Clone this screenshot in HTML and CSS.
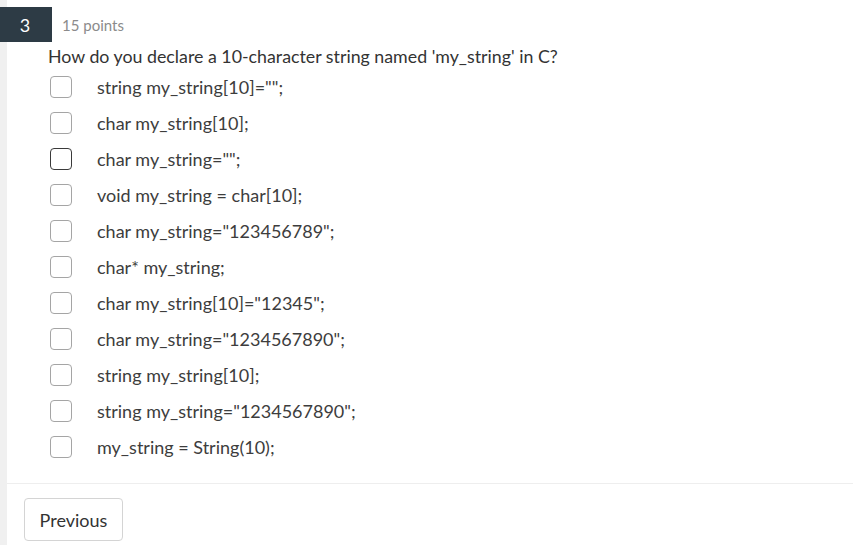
FILE: index.html
```html
<!DOCTYPE html>
<html>
<head>
<meta charset="utf-8">
<link rel="stylesheet" href="styles.css">
</head>
<body>
<div class="page">
  <div class="strip"></div>
  <div class="main">
    <div class="question">
      <div class="header">
        <div class="badge">3</div>
        <div class="points">15 points</div>
      </div>
      <div class="qtext">How do you declare a 10-character string named 'my_string' in C?</div>
      <ul class="options">
        <li class="opt"><span class="box"></span><span class="label">string my_string[10]="";</span></li>
        <li class="opt"><span class="box"></span><span class="label">char my_string[10];</span></li>
        <li class="opt"><span class="box focus"></span><span class="label">char my_string="";</span></li>
        <li class="opt"><span class="box"></span><span class="label">void my_string = char[10];</span></li>
        <li class="opt"><span class="box"></span><span class="label">char my_string="123456789";</span></li>
        <li class="opt"><span class="box"></span><span class="label">char* my_string;</span></li>
        <li class="opt"><span class="box"></span><span class="label">char my_string[10]="12345";</span></li>
        <li class="opt"><span class="box"></span><span class="label">char my_string="1234567890";</span></li>
        <li class="opt"><span class="box"></span><span class="label">string my_string[10];</span></li>
        <li class="opt"><span class="box"></span><span class="label">string my_string="1234567890";</span></li>
        <li class="opt"><span class="box"></span><span class="label">my_string = String(10);</span></li>
      </ul>
    </div>
    <div class="footer">
      <button class="btn">Previous</button>
    </div>
  </div>
</div>
</body>
</html>
```
FILE: styles.css
```css
html, body {
  margin: 0;
  padding: 0;
  background: #fff;
}
body {
  font-family: Lato, "Liberation Sans", sans-serif;
  color: #333;
  width: 853px;
  height: 545px;
  overflow: hidden;
}
.page {
  display: flex;
  height: 545px;
}
.strip {
  width: 7px;
  flex: none;
  background: #f0f0f0;
}
.main {
  flex: 1;
  display: flex;
  flex-direction: column;
}
.question {
  padding-top: 7px;
  height: 484px;
  box-sizing: border-box;
  border-bottom: 1px solid #eeeeee;
}
.header {
  display: flex;
  align-items: center;
  height: 35px;
  margin-left: -7px;
}
.badge {
  width: 52px;
  height: 35px;
  background: #2d3b45;
  color: #fff;
  font-size: 18px;
  display: flex;
  align-items: center;
  justify-content: center;
  box-sizing: border-box;
  padding-right: 2px;
}
.points {
  margin-left: 10px;
  font-size: 15px;
  color: #8b8b8b;
}
.qtext {
  margin-left: 41px;
  font-size: 17.8px;
  color: #333;
  height: 24px;
  line-height: 24px;
  margin-top: 2px;
}
.options {
  list-style: none;
  margin: 0;
  padding: 0;
  margin-left: 43px;
  margin-top: 1px;
}
.opt {
  display: flex;
  align-items: center;
  height: 36px;
}
.box {
  width: 22px;
  height: 22px;
  box-sizing: border-box;
  border: 1px solid #a5a5a5;
  border-radius: 4px;
  flex: none;
}
.box.focus {
  border-color: #3a3a3a;
}
.label {
  margin-left: 25px;
  font-size: 18px;
  color: #3d3d3d;
}
.footer {
  padding: 14px 0 0 17px;
}
.btn {
  font-family: Lato, "Liberation Sans", sans-serif;
  font-size: 18px;
  color: #333;
  background: #fff;
  border: 1px solid #d4d4d4;
  border-radius: 4px;
  width: 99px;
  height: 43px;
  padding: 0;
}
```
